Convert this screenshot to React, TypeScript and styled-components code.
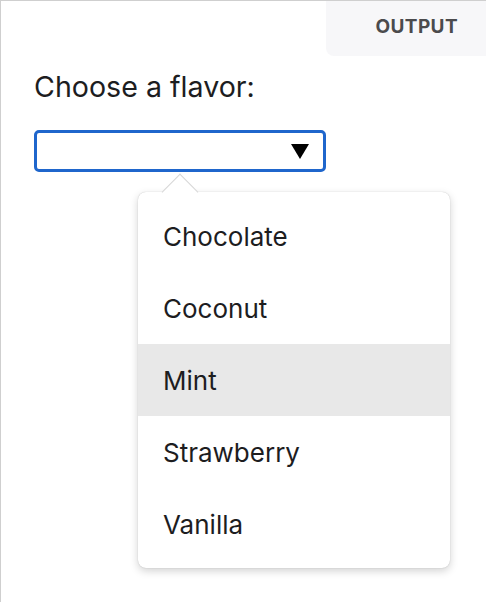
import styled, { createGlobalStyle } from "styled-components";

const GlobalStyle = createGlobalStyle`
  html, body {
    margin: 0;
    padding: 0;
    background: #ffffff;
  }
  body {
    font-family: Inter, "Liberation Sans", sans-serif;
    color: #1d1d1f;
  }
`;

const Frame = styled.div`
  position: relative;
  box-sizing: border-box;
  height: 602px;
  border-top: 1px solid #cfcfcf;
  border-left: 1px solid #cfcfcf;
  overflow: hidden;
`;

const Header = styled.div`
  display: flex;
  justify-content: flex-end;
`;

const Tab = styled.div`
  box-sizing: border-box;
  width: 160px;
  height: 55px;
  display: flex;
  align-items: center;
  justify-content: flex-end;
  padding: 0 28px 4px 0;
  background: #f7f7f9;
  border-bottom-left-radius: 8px;
  font-family: Inter, "Liberation Sans", sans-serif;
  font-weight: 700;
  font-size: 19px;
  letter-spacing: 0.4px;
  color: #4b4b4d;
`;

const Content = styled.div`
  padding: 13px 0 0 33px;
`;

const Label = styled.div`
  font-size: 28.6px;
  line-height: 35px;
  color: #1d1d1f;
`;

const SelectBox = styled.div`
  box-sizing: border-box;
  margin-top: 26px;
  width: 292px;
  height: 42px;
  border: 3px solid #1f66cc;
  border-radius: 5px;
  display: flex;
  align-items: center;
  justify-content: flex-end;
  padding-right: 14px;
`;

const Popup = styled.div`
  position: absolute;
  left: 137px;
  top: 191px;
  width: 312px;
  box-sizing: border-box;
  padding: 8px 0;
  background: #ffffff;
  border-radius: 8px;
  box-shadow: 0 0 1px rgba(0, 0, 0, 0.25), 0 3px 9px rgba(0, 0, 0, 0.18);

  &::before {
    content: "";
    position: absolute;
    left: 29px;
    top: -13px;
    width: 25px;
    height: 25px;
    background: #ffffff;
    border-top: 1px solid #d6d6d6;
    border-left: 1px solid #d6d6d6;
    transform: rotate(45deg);
  }
`;

const Option = styled.div<{ $active?: boolean }>`
  position: relative;
  height: 72px;
  display: flex;
  align-items: center;
  padding-left: 25px;
  font-size: 26px;
  color: #1d1d1f;
  background: ${(p) => (p.$active ? "#e8e8e8" : "transparent")};
`;

const flavors = ["Chocolate", "Coconut", "Mint", "Strawberry", "Vanilla"];

export default function App() {
  return (
    <Frame>
      <GlobalStyle />
      <Header>
        <Tab>OUTPUT</Tab>
      </Header>
      <Content>
        <Label>Choose a flavor:</Label>
        <SelectBox>
          <svg width="18" height="15" viewBox="0 0 18 15">
            <polygon points="0,0 18,0 9,15" fill="#000000" />
          </svg>
        </SelectBox>
      </Content>
      <Popup>
        {flavors.map((f) => (
          <Option key={f} $active={f === "Mint"}>
            {f}
          </Option>
        ))}
      </Popup>
    </Frame>
  );
}
